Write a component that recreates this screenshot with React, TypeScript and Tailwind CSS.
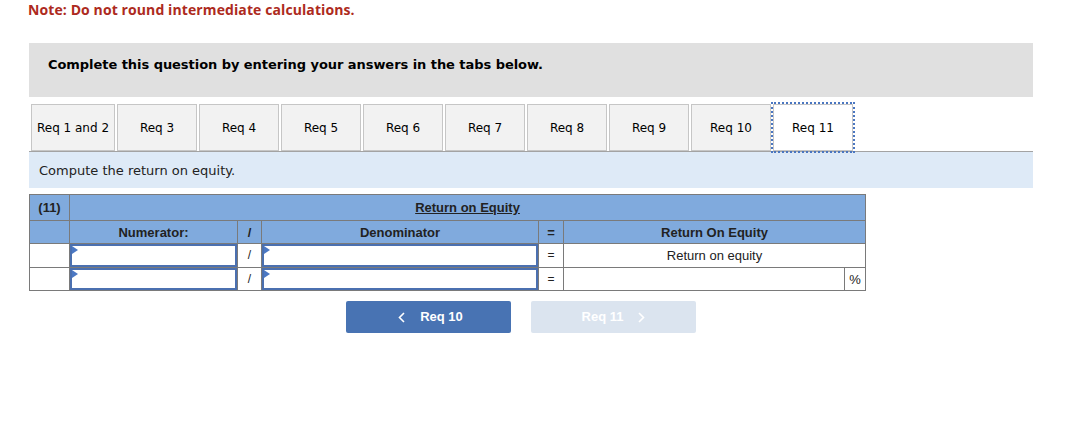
import React from "react";

const tabs = ["Req 1 and 2", "Req 3", "Req 4", "Req 5", "Req 6", "Req 7", "Req 8", "Req 9", "Req 10", "Req 11"];

function InputCell() {
  return (
    <td className="border border-[#7a7a7a] p-0 relative">
      <div className="absolute inset-0 border-2 border-[#4b70b0] bg-white">
        <svg className="absolute left-0 top-0" width="6" height="8" viewBox="0 0 6 8">
          <polygon points="0,0 6,4 0,8" fill="#4b78c4" />
        </svg>
      </div>
    </td>
  );
}

export default function App() {
  return (
    <div className="w-[1073px] h-[435px] bg-white pl-[29px] pr-[40px] font-['DejaVu_Sans',sans-serif]">
      <p className="pt-[2px] h-[20px] text-[14px] leading-[16px] font-bold text-[#ad2a20] font-['Open_Sans',sans-serif] tracking-[0.1px] -ml-[1px]">
        Note: Do not round intermediate calculations.
      </p>
      <div className="mt-[23px] h-[54px] bg-[#e0e0e0] pl-[19px] pt-[14px]">
        <div className="text-[13px] leading-[16px] font-bold text-black tracking-[-0.05px]">Complete this question by entering your answers in the tabs below.</div>
      </div>
      <div className="mt-[7px] flex gap-[2px] pl-[2px] h-[47px]">
        {tabs.map((t, i) => {
          const active = i === tabs.length - 1;
          return (
            <div
              key={t}
              className={
                "flex items-center justify-center pt-[1px] text-[12px] text-black border border-[#c6c6c6] " +
                (i === 0 ? "w-[84px] " : "w-[80px] ") +
                (active ? "bg-white border-[#9a9a9a] outline-2 outline-dotted outline-[#4a76c0]" : "bg-[#f2f2f2]")
              }
            >
              {t}
            </div>
          );
        })}
      </div>
      <div className="h-[37px] bg-[#deeaf7] border-t border-[#a3a3a3] flex items-center pl-[10px] pt-[1px]">
        <span className="text-[13px] text-[#222]">Compute the return on equity.</span>
      </div>
      <table className="mt-[6px] border-collapse table-fixed w-[836px] font-['Liberation_Sans',sans-serif] text-[13px] leading-[15px] text-[#222]">
        <colgroup>
          <col className="w-[40px]" />
          <col className="w-[168px]" />
          <col className="w-[24px]" />
          <col className="w-[277px]" />
          <col className="w-[25px]" />
          <col className="w-[281px]" />
          <col className="w-[21px]" />
        </colgroup>
        <tbody>
          <tr className="h-[26px] bg-[#80aadd]">
            <td className="border border-[#7a7a7a] text-center font-bold p-0">(11)</td>
            <td colSpan={6} className="border border-[#7a7a7a] text-center font-bold p-0">
              <span className="underline">Return on Equity</span>
            </td>
          </tr>
          <tr className="h-[23px] bg-[#80aadd] font-bold">
            <td className="border border-[#7a7a7a] p-0"></td>
            <td className="border border-[#7a7a7a] text-center p-0">Numerator:</td>
            <td className="border border-[#7a7a7a] text-center p-0">/</td>
            <td className="border border-[#7a7a7a] text-center p-0">Denominator</td>
            <td className="border border-[#7a7a7a] text-center p-0">=</td>
            <td colSpan={2} className="border border-[#7a7a7a] text-center p-0">Return On Equity</td>
          </tr>
          <tr className="h-[24px]">
            <td className="border border-[#7a7a7a] p-0"></td>
            <InputCell />
            <td className="border border-[#7a7a7a] text-center p-0 text-[12px]">/</td>
            <InputCell />
            <td className="border border-[#7a7a7a] text-center p-0 text-[12px]">=</td>
            <td colSpan={2} className="border border-[#7a7a7a] text-center p-0">Return on equity</td>
          </tr>
          <tr className="h-[23px]">
            <td className="border border-[#7a7a7a] p-0"></td>
            <InputCell />
            <td className="border border-[#7a7a7a] text-center p-0 text-[12px]">/</td>
            <InputCell />
            <td className="border border-[#7a7a7a] text-center p-0 text-[12px]">=</td>
            <td className="border border-[#7a7a7a] p-0"></td>
            <td className="border border-[#7a7a7a] text-center p-0">%</td>
          </tr>
        </tbody>
      </table>
      <div className="mt-[10px] flex gap-[20px] pl-[317px] font-['Liberation_Sans',sans-serif]">
        <div className="w-[165px] h-[32px] rounded-[2px] bg-[#4873b3] flex items-center justify-center gap-[15px] pl-[4px] text-white text-[13px] font-bold">
          <svg width="7" height="11" viewBox="0 0 7 11"><polyline points="6,1 1.5,5.5 6,10" fill="none" stroke="white" strokeWidth="1.6" /></svg>
          <span>Req 10</span>
        </div>
        <div className="w-[165px] h-[32px] rounded-[2px] bg-[#dbe4ef] flex items-center justify-center gap-[15px] text-white text-[13px] font-bold">
          <span>Req 11</span>
          <svg width="7" height="11" viewBox="0 0 7 11"><polyline points="1,1 5.5,5.5 1,10" fill="none" stroke="white" strokeWidth="1.6" /></svg>
        </div>
      </div>
    </div>
  );
}
